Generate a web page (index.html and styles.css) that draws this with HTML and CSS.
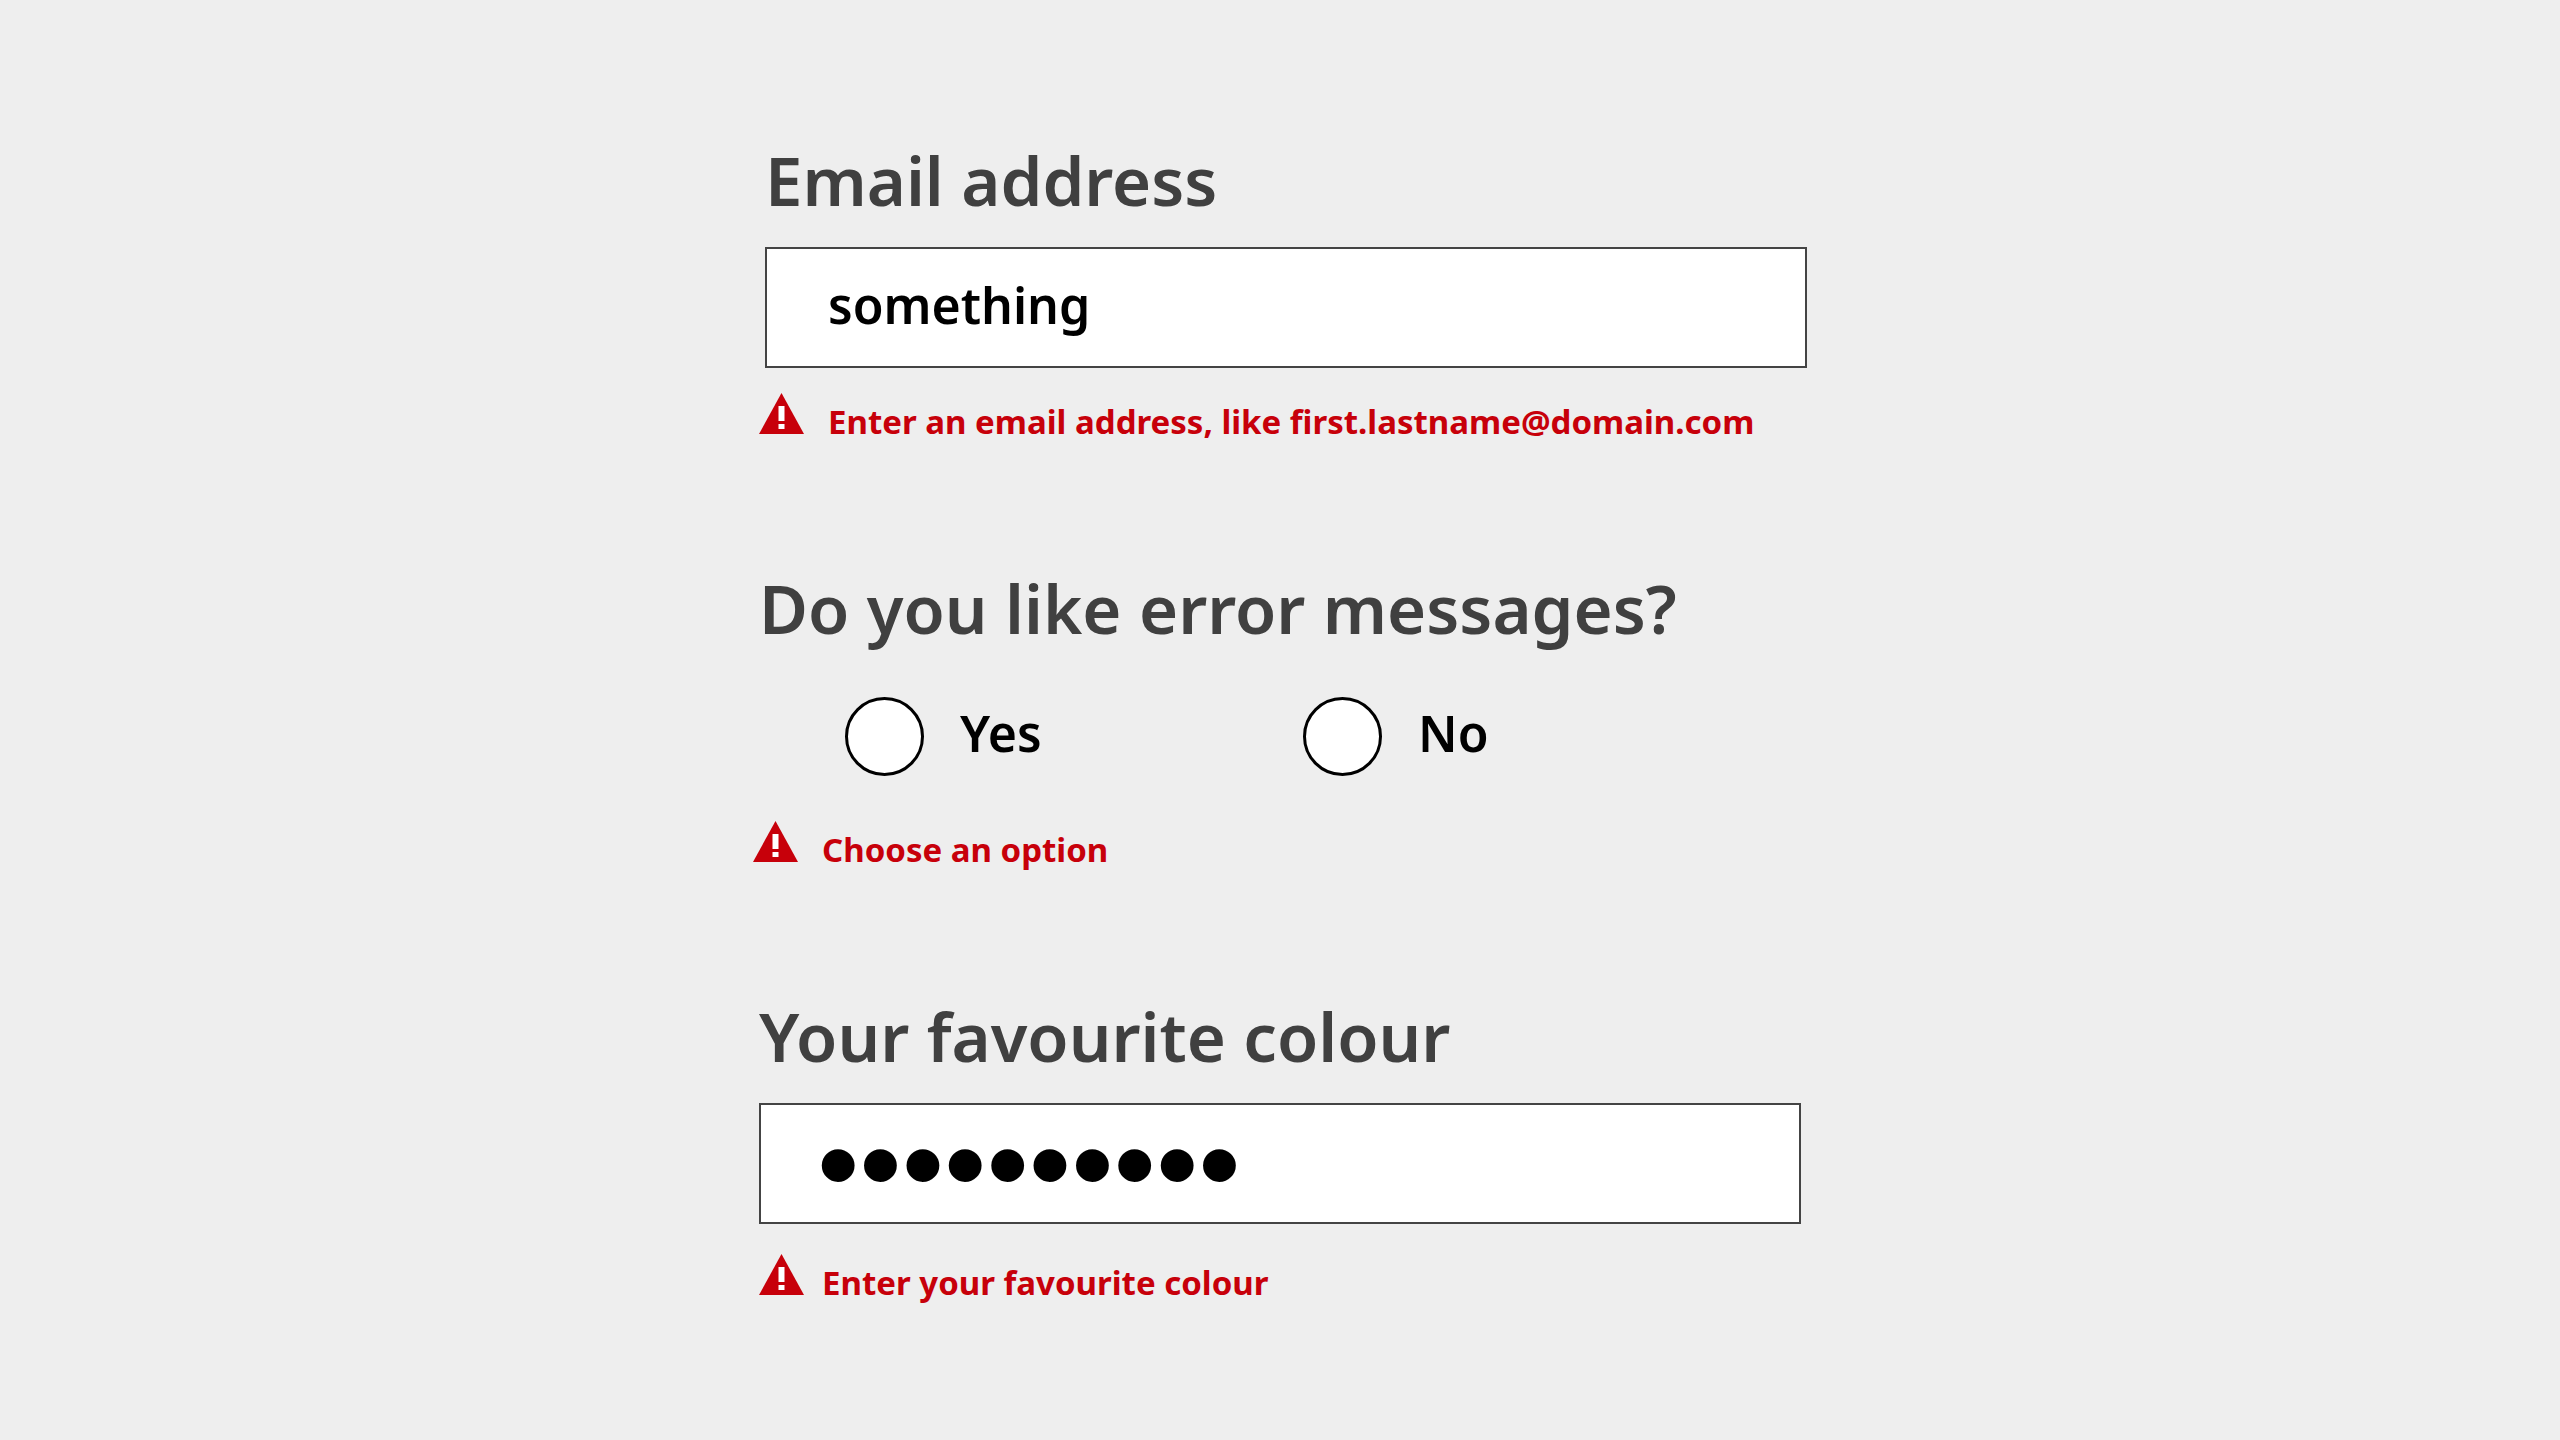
FILE: index.html
```html
<!DOCTYPE html>
<html lang="en">

<head>
    <meta charset="utf-8">
    <meta name="viewport" content="width=device-width, initial-scale=1">
    <title>Error messages</title>
    <link rel="stylesheet" href="styles.css">
</head>

<body>
    <form class="form" novalidate>
        <div class="field field-email">
            <label class="title" for="email">Email address</label>
            <input class="box" type="email" id="email" value="something" aria-describedby="email-error">
            <p class="error" id="email-error">
                <svg class="icon" viewBox="0 0 45 41" aria-hidden="true">
                    <path class="triangle" d="M22.5 0L45 41H0z" />
                    <path class="mark" d="M19.5 13h6v15h-6zM19.5 31h6v5h-6z" />
                </svg>
                <span>Enter an email address, like first.lastname@domain.com</span>
            </p>
        </div>

        <fieldset class="field field-choice" aria-describedby="choice-error">
            <legend class="title">Do you like error messages?</legend>
            <div class="options">
                <label class="option"><input class="radio" type="radio" name="like" value="yes"><span>Yes</span></label>
                <label class="option"><input class="radio" type="radio" name="like" value="no"><span>No</span></label>
            </div>
            <p class="error" id="choice-error">
                <svg class="icon" viewBox="0 0 45 41" aria-hidden="true">
                    <path class="triangle" d="M22.5 0L45 41H0z" />
                    <path class="mark" d="M19.5 13h6v15h-6zM19.5 31h6v5h-6z" />
                </svg>
                <span>Choose an option</span>
            </p>
        </fieldset>

        <div class="field field-colour">
            <label class="title" for="colour">Your favourite colour</label>
            <input class="box" type="password" id="colour" value="aquamarine" aria-describedby="colour-error">
            <p class="error" id="colour-error">
                <svg class="icon" viewBox="0 0 45 41" aria-hidden="true">
                    <path class="triangle" d="M22.5 0L45 41H0z" />
                    <path class="mark" d="M19.5 13h6v15h-6zM19.5 31h6v5h-6z" />
                </svg>
                <span>Enter your favourite colour</span>
            </p>
        </div>
    </form>
</body>

</html>
```
FILE: styles.css
```css
* {
    box-sizing: border-box;
}

body {
    margin: 0;
    padding: 140px 24px;
    background: #eee;
    color: #000;
    font-family: "Noto Sans", "Open Sans", sans-serif;
}

.form {
    max-width: 1042px;
    margin: 0 auto;
    display: flex;
    flex-direction: column;
    gap: 124px;
}

.field {
    min-width: 0;
    margin: 0;
    padding: 0;
    border: 0;
}

.field-email {
    margin: 0 -6px 0 6px;
}

.title {
    display: block;
    padding: 0;
    color: #404040;
    font-size: 67px;
    font-weight: 600;
    line-height: 80px;
}

.box {
    display: block;
    width: 100%;
    height: 121px;
    margin-top: 27px;
    padding: 0 61px 6px;
    border: 2px solid #444;
    border-radius: 0;
    background: #fff;
    color: #000;
    font-family: inherit;
    font-size: 50px;
    font-weight: 600;
}

/* larger size for the password dots */
.field-colour .box {
    padding: 0 56px;
    font-family: "Liberation Sans", Arial, sans-serif;
    font-size: 121px;
    font-weight: 400;
}

.options {
    display: grid;
    grid-template-columns: 458px 1fr;
    margin-top: 49px;
    padding-left: 86px;
}

.option {
    display: flex;
    align-items: center;
    gap: 36px;
    font-size: 50px;
    font-weight: 600;
    line-height: 64px;
}

.option span {
    padding-bottom: 8px;
}

.radio {
    appearance: none;
    width: 79px;
    height: 79px;
    margin: 0;
    border: 3px solid #000;
    border-radius: 50%;
    background: #fff;
}

.radio:checked {
    box-shadow: inset 0 0 0 16px #fff;
    background: #000;
}

.error {
    display: grid;
    grid-template-columns: 45px 1fr;
    align-items: baseline;
    gap: 24px;
    margin: 25px 0 0 -6px;
    color: #c7000a;
    font-size: 33px;
    font-weight: 700;
    line-height: 44px;
}

.field-choice .error {
    margin-top: 45px;
}

.field-colour .error {
    gap: 18px;
    margin: 30px 0 0;
}

.icon {
    width: 45px;
    height: 41px;
}

.triangle {
    fill: #c7000a;
}

.mark {
    fill: #fff;
}
```
